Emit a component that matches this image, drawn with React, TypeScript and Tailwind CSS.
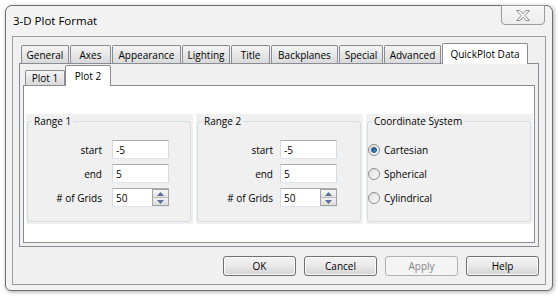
import React from "react";

const TABS = [
  { label: "General", w: "w-[48px]" },
  { label: "Axes", w: "w-[41px]" },
  { label: "Appearance", w: "w-[69px]" },
  { label: "Lighting", w: "w-[48px]" },
  { label: "Title", w: "w-[39px]" },
  { label: "Backplanes", w: "w-[67px]" },
  { label: "Special", w: "w-[44px]" },
  { label: "Advanced", w: "w-[57px]" },
];

const inputCls =
  "h-[19px] border border-[#abadb3] border-x-[#d6dbe2] border-b-[#dfe4ea] bg-white flex items-center";

const Spinner = () => (
  <div className="w-[17px] h-full flex flex-col border border-[#a3a3a3] -my-px -mr-px">
    <div className="flex-1 flex items-center justify-center bg-linear-to-b from-[#f7f7f7] to-[#e2e2e2] border-b border-[#b9b9b9]">
      <svg width="7" height="4" viewBox="0 0 7 4">
        <path d="M0 4 L3.5 0 L7 4 Z" fill="#5a6d96" />
      </svg>
    </div>
    <div className="flex-1 flex items-center justify-center bg-linear-to-b from-[#f2f2f2] to-[#dcdcdc]">
      <svg width="7" height="4" viewBox="0 0 7 4">
        <path d="M0 0 L7 0 L3.5 4 Z" fill="#5a6d96" />
      </svg>
    </div>
  </div>
);

const RangeGroup = ({
  title,
  cols,
}: {
  title: string;
  cols: string;
}) => (
  <div className="h-[110px] bg-[#f0f0f0] pl-[1px] pr-[2px] pb-[2px]">
    <fieldset className="h-full border border-[#d5dde4] rounded-[3px]">
      <legend className="ml-[4px] px-[2px] leading-[14px]">{title}</legend>
      <div className={`grid ${cols} gap-y-[5px] mt-[12px]`}>
        <div className="h-[19px] flex items-center justify-end">start</div>
        <div className={`${inputCls} pl-[3px]`}>-5</div>
        <div className="h-[19px] flex items-center justify-end">end</div>
        <div className={`${inputCls} pl-[3px]`}>5</div>
        <div className="h-[19px] flex items-center justify-end"># of Grids</div>
        <div className={inputCls}>
          <span className="flex-1 pl-[3px]">50</span>
          <Spinner />
        </div>
      </div>
    </fieldset>
  </div>
);

const Radio = ({ label, checked }: { label: string; checked?: boolean }) => (
  <div className="h-[19px] flex items-center gap-[4px]">
    <div className="w-[12px] h-[12px] rounded-full border border-[#8e8f8f] bg-linear-to-br from-[#dcdcdc] to-[#fbfbfb] flex items-center justify-center">
      {checked && (
        <div className="w-[6px] h-[6px] rounded-full bg-linear-to-br from-[#0d4f8f] to-[#49a6e6] border border-[#1b4e7e]" />
      )}
    </div>
    <span>{label}</span>
  </div>
);

const Button = ({ label, disabled }: { label: string; disabled?: boolean }) => (
  <div
    className={
      disabled
        ? "w-[73px] h-[20px] rounded-[3px] border border-[#adb2b5] bg-[#f4f4f4] text-[#838383] flex items-center justify-center"
        : "w-[73px] h-[20px] rounded-[3px] border border-[#707070] bg-linear-to-b from-[#f3f3f3] via-[#e9e9e9] to-[#d3d3d3] shadow-[inset_0_0_0_1px_#fbfbfb] flex items-center justify-center"
    }
  >
    {label}
  </div>
);

export default function App() {
  return (
    <div className="w-[558px] h-[296px] bg-white pt-[5px] pl-[5px] font-['Open_Sans',sans-serif] text-[10px] text-black leading-[14px]">
      <div className="w-[548px] h-[286px] border border-[#6e6e6e] rounded-t-[7px] rounded-b-[6px] bg-[#f2f2f2] shadow-[1px_1px_4px_rgba(0,0,0,0.35)] flex flex-col">
        <div className="h-[30px] flex items-center justify-between">
          <span className="pl-[7px] text-[11.5px]">3-D Plot Format</span>
          <div className="self-start -mt-px mr-[7px] w-[44px] h-[20px] border border-[#9c9c9c] rounded-b-[4px] bg-linear-to-b from-[#f7f7f7] to-[#ececec] flex items-center justify-center">
            <svg width="14" height="11" viewBox="0 0 14 11">
              <path
                d="M0.5 0.5 L4 0.5 L7 3.8 L10 0.5 L13.5 0.5 L8.8 5.5 L13.5 10.5 L10 10.5 L7 7.2 L4 10.5 L0.5 10.5 L5.2 5.5 Z"
                fill="#fafafa"
                stroke="#8f8f8f"
                strokeWidth="1"
                strokeLinejoin="round"
              />
            </svg>
          </div>
        </div>

        <div className="mx-[6px] h-[249px] border border-[#9a9a9a] bg-[#f0f0f0] px-[6px] pt-[6px] flex flex-col">
          <div className="flex items-end h-[20px] ml-[2px] gap-[1px]">
            {TABS.map((t) => (
              <div
                key={t.label}
                className={`${t.w} h-[18px] border border-b-0 border-[#898c95] rounded-t-[2px] bg-linear-to-b from-[#f4f4f4] to-[#dadada] flex items-center justify-center`}
              >
                {t.label}
              </div>
            ))}
            <div className="relative z-10 w-[86px] h-[21px] -mb-px border border-b-0 border-[#898c95] rounded-t-[2px] bg-white flex items-center justify-center">
              QuickPlot Data
            </div>
          </div>

          <div className="w-[520px] h-[184px] border border-[#898c95] bg-[#f0f0f0] flex flex-col">
            <div className="flex items-end h-[20px] mt-[1px] ml-[5px]">
              <div className="w-[40px] h-[15px] border border-b-0 border-[#898c95] rounded-t-[2px] bg-linear-to-b from-[#f4f4f4] to-[#dadada] flex items-center justify-center">
                Plot 1
              </div>
              <div className="relative z-10 w-[46px] h-[21px] -mb-px border border-b-0 border-[#898c95] rounded-t-[2px] bg-white flex items-center justify-center">
                Plot 2
              </div>
            </div>
            <div className="mx-[3px] h-[158px] border border-[#898c95] bg-white pt-[28px] pl-[2px]">
              <div className="grid grid-cols-[167px_167px_167px] gap-x-[3px]">
                <RangeGroup title="Range 1" cols="grid-cols-[74px_57px] gap-x-[10px]" />
                <RangeGroup title="Range 2" cols="grid-cols-[75px_57px] gap-x-[7px]" />
                <div className="h-[110px] bg-[#f0f0f0] pl-[1px] pr-[2px] pb-[2px]">
                  <fieldset className="h-full border border-[#d5dde4] rounded-[3px]">
                    <legend className="ml-[4px] px-[2px] leading-[14px]">
                      Coordinate System
                    </legend>
                    <div className="flex flex-col gap-y-[5px] mt-[12px]">
                      <Radio label="Cartesian" checked />
                      <Radio label="Spherical" />
                      <Radio label="Cylindrical" />
                    </div>
                  </fieldset>
                </div>
              </div>
            </div>
          </div>

          <div className="mt-[9px] flex justify-end gap-[8px]">
            <Button label="OK" />
            <Button label="Cancel" />
            <Button label="Apply" disabled />
            <Button label="Help" />
          </div>
        </div>
      </div>
    </div>
  );
}
